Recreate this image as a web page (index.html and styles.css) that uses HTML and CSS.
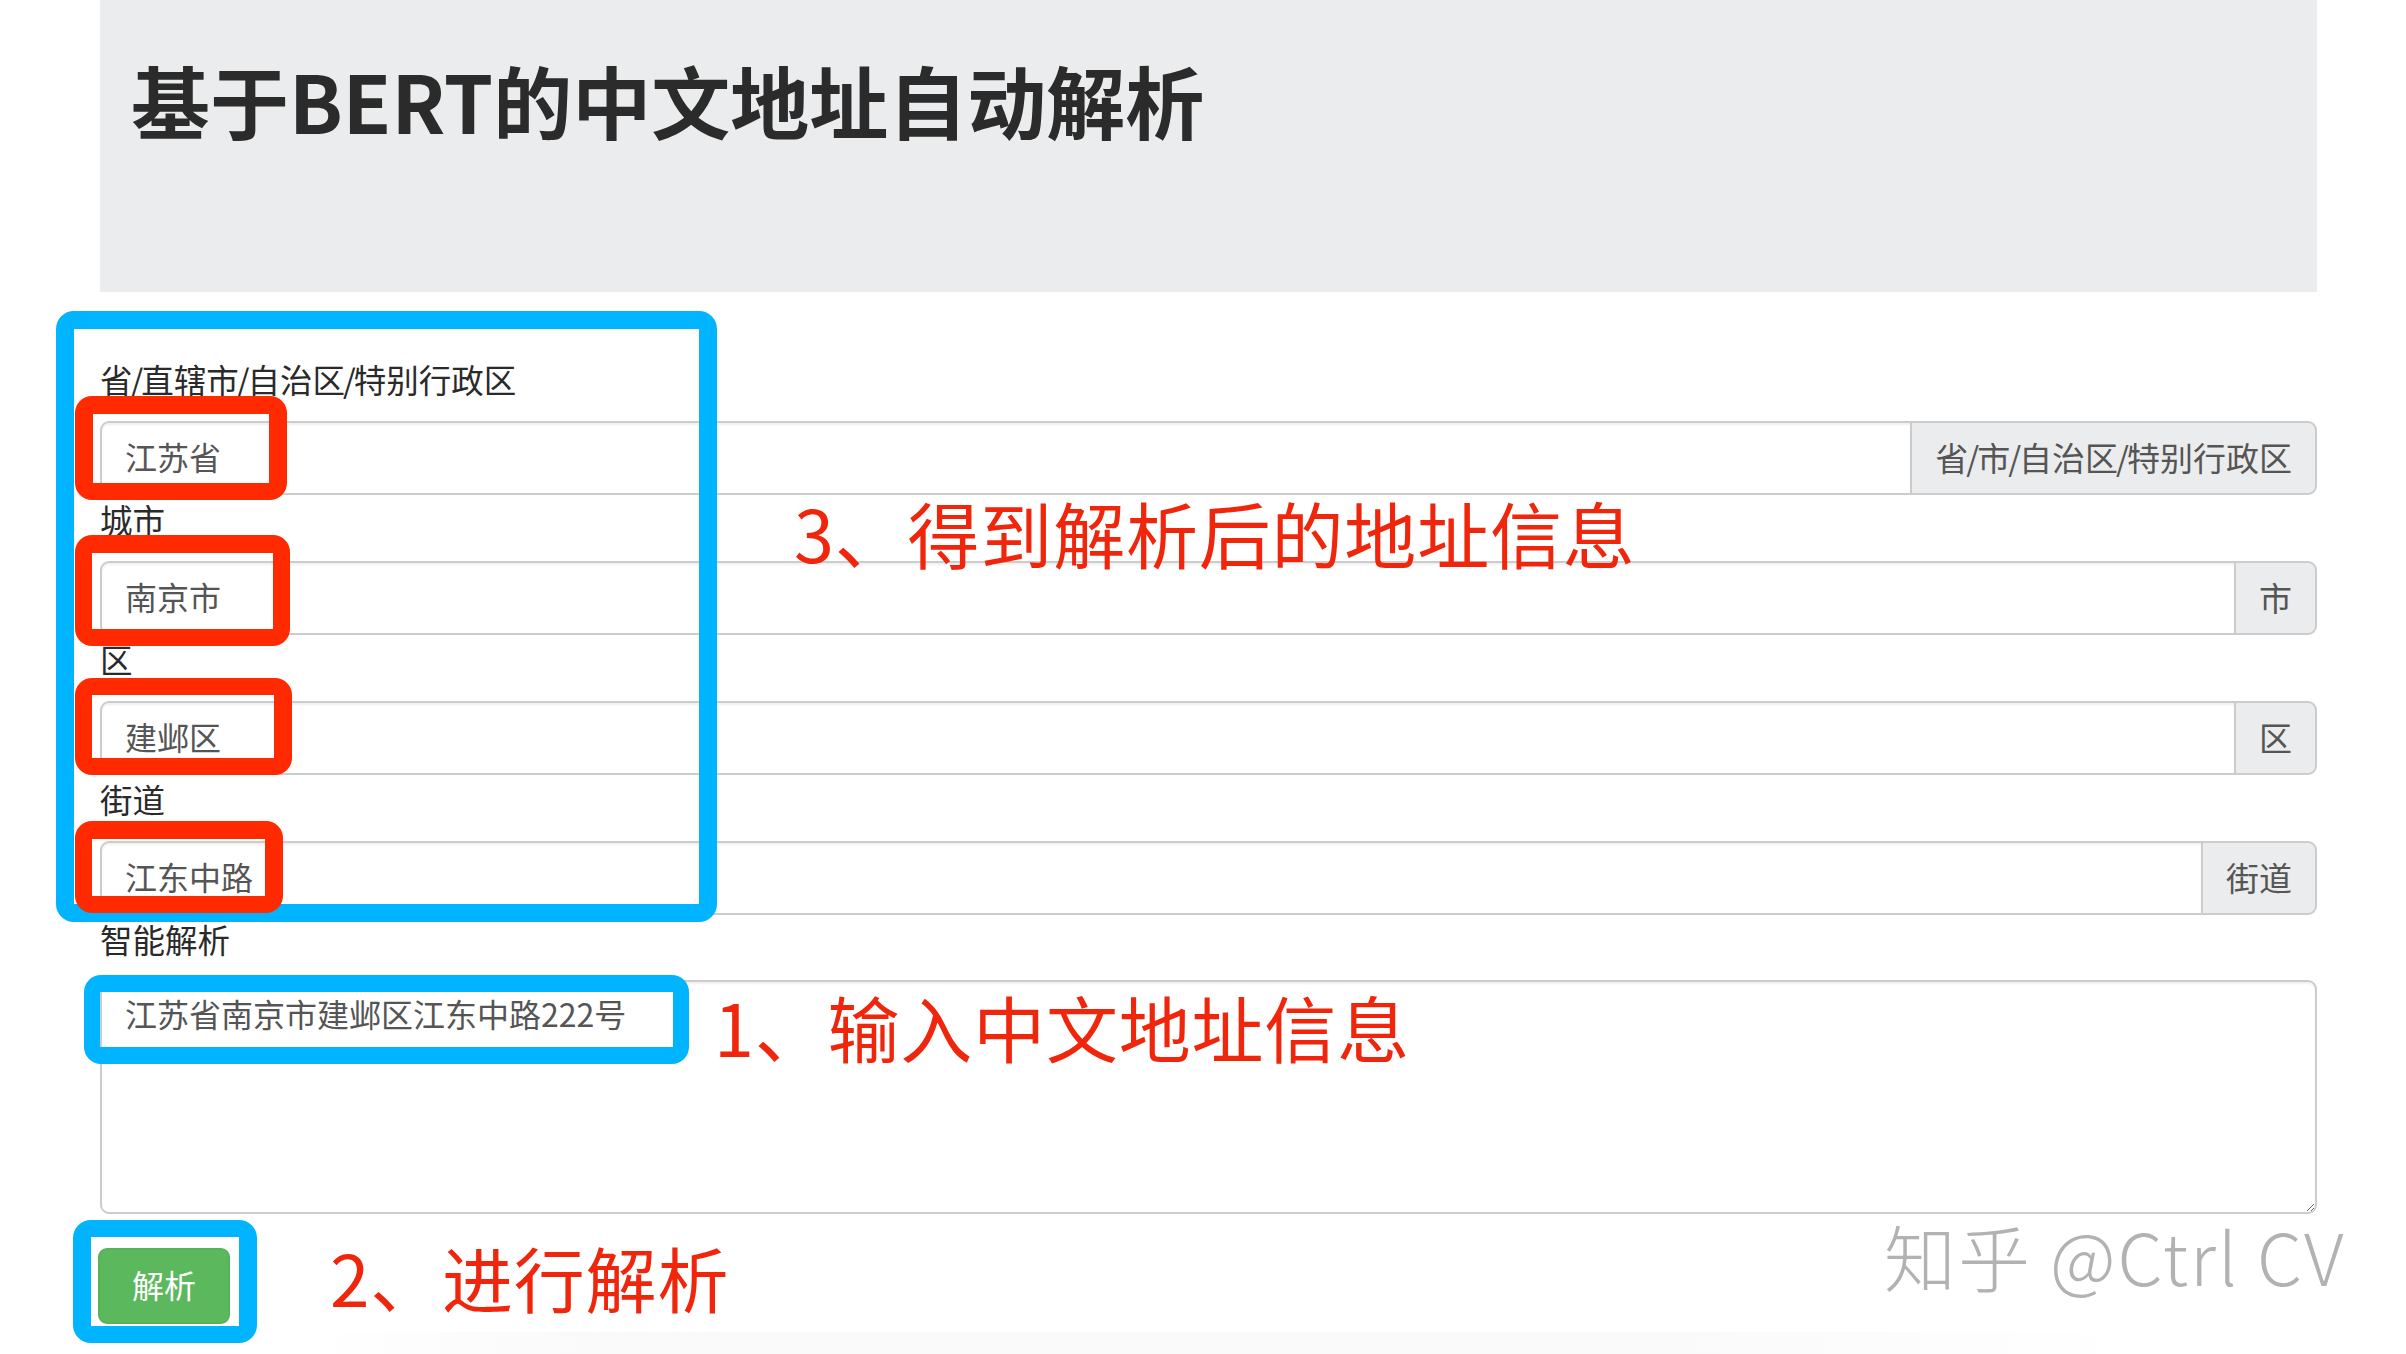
FILE: index.html
```html
<!DOCTYPE html>
<html lang="zh-CN">
<head>
<meta charset="utf-8">
<title>基于BERT的中文地址自动解析</title>
<link rel="stylesheet" href="styles.css">
</head>
<body>
<div class="page">
  <div class="jumbotron">
    <h1 class="title">基于BERT的中文地址自动解析</h1>
  </div>
  <form class="form">
    <div class="group">
      <label class="label">省<span class="sl">/</span>直辖市<span class="sl">/</span>自治区<span class="sl">/</span>特别行政区</label>
      <div class="input-group">
        <input class="input" type="text" value="江苏省">
        <span class="addon">省<span class="sl">/</span>市<span class="sl">/</span>自治区<span class="sl">/</span>特别行政区</span>
      </div>
    </div>
    <div class="group">
      <label class="label">城市</label>
      <div class="input-group">
        <input class="input" type="text" value="南京市">
        <span class="addon">市</span>
      </div>
    </div>
    <div class="group">
      <label class="label">区</label>
      <div class="input-group">
        <input class="input" type="text" value="建邺区">
        <span class="addon">区</span>
      </div>
    </div>
    <div class="group">
      <label class="label">街道</label>
      <div class="input-group">
        <input class="input" type="text" value="江东中路">
        <span class="addon">街道</span>
      </div>
    </div>
    <div class="group">
      <label class="label label-last">智能解析</label>
      <textarea class="textarea">江苏省南京市建邺区江东中路222号</textarea>
    </div>
    <button class="btn" type="button">解析</button>
  </form>
</div>

<div class="box blue b1"></div>
<div class="box red r1"></div>
<div class="box red r2"></div>
<div class="box red r3"></div>
<div class="box red r4"></div>
<div class="box blue b2"></div>
<div class="box blue b3"></div>

<div class="note n3">3、得到解析后的地址信息</div>
<div class="note n1">1、输入中文地址信息</div>
<div class="note n2">2、进行解析</div>
<div class="watermark">知乎 @Ctrl CV</div>
<div class="fade"></div>
</body>
</html>
```

FILE: styles.css
```css
html, body {
  margin: 0;
  padding: 0;
}
body {
  width: 2406px;
  height: 1354px;
  overflow: hidden;
  position: relative;
  background: #ffffff;
  font-family: "Noto Sans CJK SC", "Noto Sans", "Liberation Sans", sans-serif;
  color: #333333;
}
.page {
  margin-left: 100px;
  width: 2217px;
}
.jumbotron {
  height: 292px;
  box-sizing: border-box;
  background: #ebeced;
  padding: 60px 31px 0;
}
.title {
  margin: 0;
  font-size: 79px;
  line-height: 1;
  font-weight: 700;
  color: #2b2b2b;
}
.form {
  margin: 63px 0 0;
  display: flex;
  flex-direction: column;
  align-items: flex-start;
}
.group {
  width: 100%;
  display: flex;
  flex-direction: column;
}
.label {
  font-size: 32.5px;
  line-height: 48px;
  height: 48px;
  margin-bottom: 18px;
  color: #2a2a2a;
  font-weight: 400;
}
.label-last {
  margin-bottom: 17px;
}
.sl {
  margin: 0 -2px;
}
.input-group {
  display: flex;
  height: 74px;
}
.input {
  flex: 1;
  min-width: 0;
  box-sizing: border-box;
  height: 74px;
  margin: 0;
  border: 2px solid #cccccc;
  border-radius: 9px 0 0 9px;
  padding: 0 23px 4px;
  font-family: inherit;
  font-size: 32px;
  color: #555555;
  background: #ffffff;
  outline: none;
  box-shadow: inset 0 2px 2px rgba(0,0,0,0.06);
}
.addon {
  display: flex;
  align-items: center;
  box-sizing: border-box;
  height: 74px;
  padding: 0 23px 3px;
  background: #ebeced;
  border: 2px solid #cccccc;
  border-left: 0;
  border-radius: 0 9px 9px 0;
  font-size: 33px;
  color: #555555;
  white-space: nowrap;
}
.addon .sl {
  margin: 0 -2px;
}
.textarea {
  display: block;
  box-sizing: border-box;
  width: 100%;
  height: 234px;
  margin: 0 0 34px;
  border: 2px solid #cccccc;
  border-radius: 9px;
  padding: 10px 23px;
  font-family: inherit;
  font-size: 32px;
  line-height: 42px;
  color: #555555;
  outline: none;
  box-shadow: inset 0 2px 2px rgba(0,0,0,0.06);
}
.btn {
  width: 132px;
  height: 76px;
  box-sizing: border-box;
  border: 2px solid #58b358;
  border-radius: 9px;
  background: #5cb85c;
  color: #ffffff;
  font-family: inherit;
  font-size: 32px;
  padding: 0 0 4px;
  margin: 0 0 0 -2px;
}

/* annotation overlays */
.box {
  position: absolute;
  box-sizing: border-box;
  border-style: solid;
  pointer-events: none;
}
.blue { border-color: #00b4ff; }
.red { border-color: #ff2a00; }
.b1 { left: 56px; top: 311px; width: 661px; height: 611px; border-width: 18px; border-radius: 18px; }
.r1 { left: 75px; top: 396px; width: 212px; height: 104px; border-width: 18px 18px 17px; border-radius: 17px; }
.r2 { left: 75px; top: 535px; width: 215px; height: 111px; border-width: 18px 17px 17px; border-radius: 17px; }
.r3 { left: 75px; top: 678px; width: 217px; height: 97px; border-width: 17px 18px 17px 17px; border-radius: 17px; }
.r4 { left: 75px; top: 821px; width: 208px; height: 92px; border-width: 18px 18px 17px 17px; border-radius: 17px; }
.b2 { left: 84px; top: 975px; width: 605px; height: 89px; border-width: 17px 16px; border-radius: 17px; }
.b3 { left: 73px; top: 1220px; width: 184px; height: 123px; border-width: 17px 18px; border-radius: 18px; }

.note {
  position: absolute;
  font-size: 72px;
  line-height: 1;
  color: #f0260c;
  white-space: nowrap;
  letter-spacing: 0.8px;
}
.n3 { left: 794px; top: 496px; }
.n1 { left: 714px; top: 990px; }
.n2 { left: 330px; top: 1241px; font-size: 71px; }

.watermark {
  position: absolute;
  left: 1884px;
  top: 1219px;
  font-size: 72px;
  line-height: 1;
  font-weight: 300;
  color: #b2b2b2;
  white-space: nowrap;
  letter-spacing: 2px;
}
.fade {
  position: absolute;
  left: 300px;
  top: 1332px;
  width: 1850px;
  height: 22px;
  background: linear-gradient(90deg, rgba(0,0,0,0), rgba(0,0,0,0.018) 15%, rgba(0,0,0,0.018) 75%, rgba(0,0,0,0));
}
```
